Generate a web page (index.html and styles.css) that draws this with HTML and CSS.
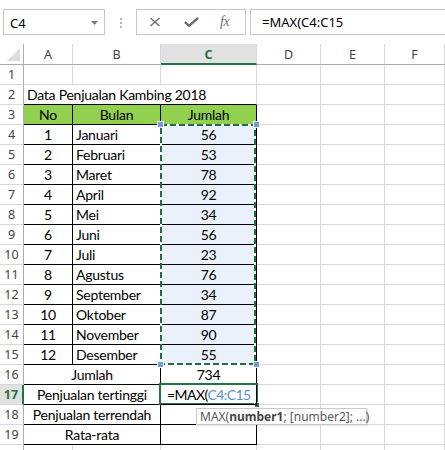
FILE: index.html
```html
<!DOCTYPE html>
<html lang="id">
<head>
<meta charset="utf-8">
<title>Excel</title>
<link rel="stylesheet" href="styles.css">
</head>
<body>
<div class="app">
  <div class="fbar">
    <div class="namebox">
      <span class="nb-text">C4</span>
      <svg class="dd" width="7" height="4" viewBox="0 0 7 4"><path d="M0 0h7L3.5 4z" fill="#7a7a7a"/></svg>
    </div>
    <div class="grip"><i></i><i></i><i></i></div>
    <div class="btns">
      <svg class="ico" width="12" height="10" viewBox="0 0 12 10"><path d="M1.5 1l9 8M10.5 1l-9 8" stroke="#6e6e6e" stroke-width="1.4" fill="none"/></svg>
      <svg class="ico" width="15" height="10" viewBox="0 0 15 10"><path d="M1 5.2l4 3.6L14 1" stroke="#6e6e6e" stroke-width="2.4" fill="none"/></svg>
      <span class="fx">fx</span>
    </div>
    <div class="formula">=MAX(C4:C15</div>
  </div>

  <div class="sheet">
    <div class="ch corner"><svg width="13" height="13" viewBox="0 0 13 13"><path d="M13 0V13H0z" fill="#dcdcdc"/></svg></div>
    <div class="ch">A</div>
    <div class="ch">B</div>
    <div class="ch ch-act">C</div>
    <div class="ch">D</div>
    <div class="ch">E</div>
    <div class="ch">F</div>

    <div class="rh">1</div><div class="c"></div><div class="c"></div><div class="c"></div><div class="c"></div><div class="c"></div><div class="c"></div>

    <div class="rh">2</div><div class="c s3 kb lft">Data Penjualan Kambing 2018</div><div class="c"></div><div class="c"></div><div class="c"></div>

    <div class="rh">3</div><div class="c k grn ctr">No</div><div class="c k grn ctr">Bulan</div><div class="c k grn ctr">Jumlah</div><div class="c"></div><div class="c"></div><div class="c"></div>

    <div class="rh">4</div><div class="c k ctr">1</div><div class="c k lft">Januari</div><div class="c k sel ctr">56</div><div class="c"></div><div class="c"></div><div class="c"></div>
    <div class="rh">5</div><div class="c k ctr">2</div><div class="c k lft">Februari</div><div class="c k sel ctr">53</div><div class="c"></div><div class="c"></div><div class="c"></div>
    <div class="rh">6</div><div class="c k ctr">3</div><div class="c k lft">Maret</div><div class="c k sel ctr">78</div><div class="c"></div><div class="c"></div><div class="c"></div>
    <div class="rh">7</div><div class="c k ctr">4</div><div class="c k lft">April</div><div class="c k sel ctr">92</div><div class="c"></div><div class="c"></div><div class="c"></div>
    <div class="rh">8</div><div class="c k ctr">5</div><div class="c k lft">Mei</div><div class="c k sel ctr">34</div><div class="c"></div><div class="c"></div><div class="c"></div>
    <div class="rh">9</div><div class="c k ctr">6</div><div class="c k lft">Juni</div><div class="c k sel ctr">56</div><div class="c"></div><div class="c"></div><div class="c"></div>
    <div class="rh">10</div><div class="c k ctr">7</div><div class="c k lft">Juli</div><div class="c k sel ctr">23</div><div class="c"></div><div class="c"></div><div class="c"></div>
    <div class="rh">11</div><div class="c k ctr">8</div><div class="c k lft">Agustus</div><div class="c k sel ctr">76</div><div class="c"></div><div class="c"></div><div class="c"></div>
    <div class="rh">12</div><div class="c k ctr">9</div><div class="c k lft">September</div><div class="c k sel ctr">34</div><div class="c"></div><div class="c"></div><div class="c"></div>
    <div class="rh">13</div><div class="c k ctr">10</div><div class="c k lft">Oktober</div><div class="c k sel ctr">87</div><div class="c"></div><div class="c"></div><div class="c"></div>
    <div class="rh">14</div><div class="c k ctr">11</div><div class="c k lft">November</div><div class="c k sel ctr">90</div><div class="c"></div><div class="c"></div><div class="c"></div>
    <div class="rh">15</div><div class="c k ctr">12</div><div class="c k lft">Desember</div><div class="c k sel ctr">55</div><div class="c"></div><div class="c"></div><div class="c"></div>

    <div class="rh">16</div><div class="c s2 k ctr">Jumlah</div><div class="c k ctr">734</div><div class="c"></div><div class="c"></div><div class="c"></div>
    <div class="rh rh-act">17</div><div class="c s2 k ctr">Penjualan tertinggi</div><div class="c k edit">=MAX(<span class="ref">C4:C15</span></div><div class="c"></div><div class="c"></div><div class="c"></div>
    <div class="rh">18</div><div class="c s2 k ctr">Penjualan terrendah</div><div class="c k"></div><div class="c"></div><div class="c"></div><div class="c"></div>
    <div class="rh">19</div><div class="c s2 k ctr">Rata-rata</div><div class="c k"></div><div class="c"></div><div class="c"></div><div class="c"></div>
    <div class="rh"></div><div class="c"></div><div class="c"></div><div class="c"></div><div class="c"></div><div class="c"></div><div class="c"></div>

    <svg class="marquee" width="101" height="245" viewBox="0 0 101 245">
      <rect x="3" y="3" width="94" height="239" fill="none" stroke="#ffffff" stroke-width="2"/>
      <rect x="3" y="3" width="94" height="239" fill="none" stroke="#1f6e41" stroke-width="2" stroke-dasharray="6 3"/>
    </svg>
    <span class="handle h-tl"></span>
    <span class="handle h-tr"></span>
    <span class="handle h-bl"></span>
    <span class="handle h-br"></span>

    <div class="active-cell"></div>
    <span class="fill-handle"></span>

    <div class="tip">MAX(<b>number1</b>; [number2]; ...)</div>
  </div>
</div>
</body>
</html>
```

FILE: styles.css
```css
* { box-sizing: border-box; }

html, body {
  margin: 0;
  padding: 0;
  background: #ffffff;
}

.app {
  width: 445px;
  height: 450px;
  overflow: hidden;
  font-family: Lato, "Liberation Sans", sans-serif;
}

/* ---------- formula bar ---------- */
.fbar {
  height: 44px;
  padding-top: 9px;
  padding-left: 3px;
  display: flex;
  align-items: flex-start;
}

.namebox {
  width: 102px;
  height: 26px;
  border: 1px solid #c6c6c6;
  display: flex;
  align-items: center;
  justify-content: space-between;
  padding: 0 6px 0 6px;
  font-family: "Noto Sans", sans-serif;
  font-size: 13px;
  color: #000;
}

.nb-text { padding-top: 1px; }

.dd { margin-top: 1px; }

.grip {
  width: 31px;
  height: 26px;
  display: flex;
  flex-direction: column;
  align-items: center;
  justify-content: center;
  gap: 2px;
  padding-top: 1px;
}

.grip i {
  display: block;
  width: 2px;
  height: 2px;
  background: #b4b4b4;
}

.btns {
  width: 110px;
  height: 26px;
  border: 1px solid #c6c6c6;
  display: flex;
  align-items: center;
  padding-left: 12px;
  gap: 0;
}

.btns .ico:first-child { margin-right: 23px; }
.btns .ico:nth-child(2) { margin-right: 21px; }

.fx {
  font-family: "Liberation Serif", serif;
  font-style: italic;
  font-size: 14px;
  color: #6e6e6e;
  letter-spacing: -0.5px;
  padding-bottom: 1px;
}

.formula {
  margin-left: 4px;
  flex: 1;
  height: 26px;
  border: 1px solid #c6c6c6;
  border-right: none;
  padding-left: 11px;
  font-family: "Noto Sans", sans-serif;
  font-size: 13px;
  line-height: 24px;
  color: #000;
}

/* ---------- sheet ---------- */
.sheet {
  position: relative;
  display: grid;
  grid-template-columns: 24px 49px 88px 96px 64px 64px 60px;
  grid-template-rows: 21px;
  grid-auto-rows: 20px;
}

.ch {
  border-right: 1px solid #d8d8d8;
  border-bottom: 1px solid #ababab;
  font-family: "Noto Sans", sans-serif;
  font-size: 12.5px;
  color: #444;
  text-align: center;
  line-height: 20px;
  padding-top: 1px;
}

.corner {
  border-right: 1px solid #ababab;
  display: flex;
  align-items: flex-end;
  justify-content: flex-end;
  padding: 0 3px 3px 0;
}

.corner svg { display: block; }

.ch-act {
  background: #e1e1e1;
  color: #217346;
  font-weight: bold;
  border-bottom: 2px solid #217346;
}

.rh {
  border-right: 1px solid #ababab;
  border-bottom: 1px solid #d8d8d8;
  font-family: "Noto Sans", sans-serif;
  font-size: 12.5px;
  color: #444;
  text-align: center;
  line-height: 19px;
}

.rh-act {
  background: #e1e1e1;
  color: #217346;
  font-weight: bold;
  border-right: 2px solid #217346;
}

.c {
  border-right: 1px solid #d8d8d8;
  border-bottom: 1px solid #d8d8d8;
  font-size: 14px;
  letter-spacing: -0.25px;
  line-height: 19px;
  color: #000;
  white-space: nowrap;
  overflow: visible;
}

.s2 { grid-column: span 2; }
.s3 { grid-column: span 3; }

.k {
  border-right-color: #000;
  border-bottom-color: #000;
}

.kb { border-bottom-color: #000; }

.grn { background: #92d050; }
.sel { background: #ebf1fa; }

.ctr { text-align: center; }
.lft { text-align: left; padding-left: 3px; }

.edit {
  padding-left: 6px;
  letter-spacing: -0.55px;
  position: relative;
  z-index: 1;
}

.ref { color: #5b8fd9; }

/* ---------- overlays ---------- */
.marquee {
  position: absolute;
  left: 158px;
  top: 78px;
  pointer-events: none;
}

.handle {
  position: absolute;
  width: 7px;
  height: 7px;
  background: #6f9ce0;
  border: 1px solid #ffffff;
}

.h-tl { left: 157px; top: 77px; }
.h-tr { left: 253px; top: 77px; }
.h-bl { left: 157px; top: 317px; }
.h-br { left: 253px; top: 317px; }

.active-cell {
  position: absolute;
  left: 159px;
  top: 339px;
  width: 99px;
  height: 22px;
  border: 2px solid #217346;
}

.fill-handle {
  position: absolute;
  left: 254px;
  top: 358px;
  width: 6px;
  height: 6px;
  background: #217346;
  border: 1px solid #ffffff;
}

.tip {
  position: absolute;
  left: 196px;
  top: 364px;
  width: 171px;
  height: 17px;
  background: #ffffff;
  border: 1px solid #c8c8c8;
  box-shadow: 1px 1px 1px rgba(0,0,0,0.08);
  font-family: "Noto Sans", sans-serif;
  font-size: 12px;
  line-height: 15px;
  color: #595959;
  padding-left: 3px;
  white-space: nowrap;
  z-index: 2;
}

.tip b { font-weight: bold; color: #444; }
```
